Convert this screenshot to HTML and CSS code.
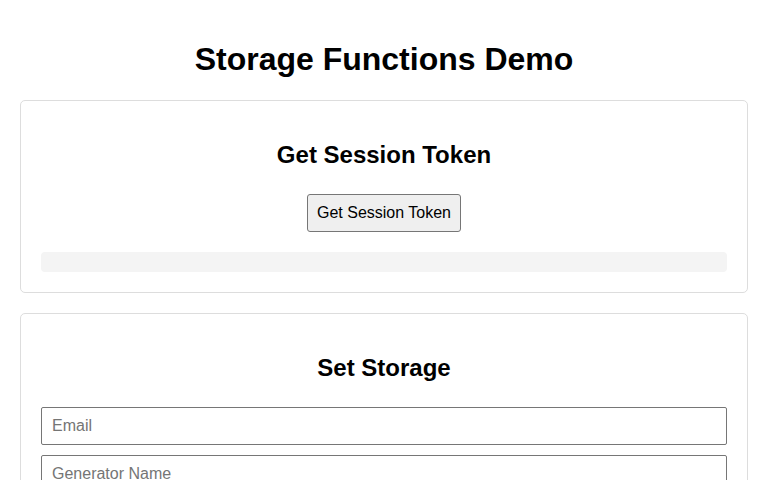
FILE: index.html
```html
<!DOCTYPE html>
<html lang="en">
<head>
<meta charset="utf-8">
<title>Storage Functions Demo</title>
<link rel="stylesheet" href="styles.css">
</head>
<body>
<h1 class="title">Storage Functions Demo</h1>
<section class="card">
  <h2 class="card-title">Get Session Token</h2>
  <div class="actions">
    <button class="btn" type="button">Get Session Token</button>
  </div>
  <div class="result"></div>
</section>
<section class="card">
  <h2 class="card-title">Set Storage</h2>
  <div class="form">
    <input class="field" type="text" placeholder="Email">
    <input class="field" type="text" placeholder="Generator Name">
    <input class="field" type="text" placeholder="Value">
  </div>
</section>
</body>
</html>
```
FILE: styles.css
```css
html, body {
  margin: 0;
  background: #fff;
}
body {
  padding: 20px;
  font-family: "Liberation Sans", Arial, sans-serif;
  color: #000;
}
.title {
  font-size: 32px;
  font-weight: bold;
  text-align: center;
  margin: 21.44px 0;
  line-height: 37px;
}
.card {
  border: 1px solid #ddd;
  border-radius: 5px;
  padding: 20px;
  margin-bottom: 20px;
}
.card-title {
  font-size: 24px;
  font-weight: bold;
  text-align: center;
  margin: 19.92px 0;
  line-height: 28px;
}
.actions {
  display: flex;
  justify-content: center;
  padding-top: 5px;
}
.btn {
  font-family: "Liberation Sans", Arial, sans-serif;
  font-size: 16px;
  line-height: 18px;
  padding: 9px 9px;
  border: 1px solid #767676;
  border-radius: 3px;
  background: #efefef;
  color: #000;
}
.result {
  margin-top: 20px;
  height: 20px;
  background: #f4f4f4;
  border-radius: 4px;
}
.form {
  display: flex;
  flex-direction: column;
  gap: 10px;
  padding-top: 5px;
}
.field {
  box-sizing: border-box;
  width: 100%;
  margin: 0;
  font-family: "Liberation Sans", Arial, sans-serif;
  font-size: 16px;
  line-height: 18px;
  padding: 9px 10px;
  border: 1px solid #767676;
  border-radius: 2px;
  color: #000;
  background: #fff;
}
.field::placeholder {
  color: #757575;
}
```
